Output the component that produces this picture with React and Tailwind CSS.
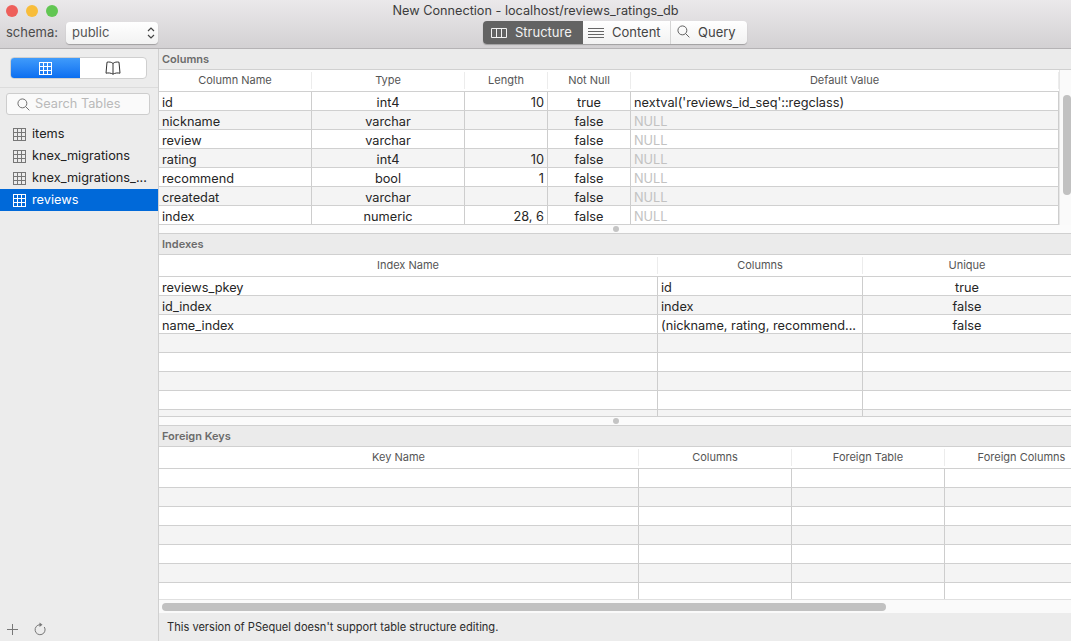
import React from 'react';

const columnRows = [
  ['id', 'int4', '10', 'true', "nextval('reviews_id_seq'::regclass)"],
  ['nickname', 'varchar', '', 'false', 'NULL'],
  ['review', 'varchar', '', 'false', 'NULL'],
  ['rating', 'int4', '10', 'false', 'NULL'],
  ['recommend', 'bool', '1', 'false', 'NULL'],
  ['createdat', 'varchar', '', 'false', 'NULL'],
  ['index', 'numeric', '28, 6', 'false', 'NULL'],
];

const indexRows = [
  ['reviews_pkey', 'id', 'true'],
  ['id_index', 'index', 'false'],
  ['name_index', '(nickname, rating, recommend...', 'false'],
  ['', '', ''],
  ['', '', ''],
  ['', '', ''],
  ['', '', ''],
  ['', '', ''],
];

const foreignRows = Array.from({ length: 7 }, () => ['', '', '', '']);

const GridIcon = ({ className }) => (
  <svg viewBox="0 0 13 13" className={className} fill="none" stroke="currentColor" strokeWidth="1" shapeRendering="crispEdges">
    <path d="M.5.5h12v12H.5zM4.500.5v12M8.500.5v12M.5 4.500h12M.5 8.500h12" />
  </svg>
);

const BookIcon = () => (
  <svg viewBox="0 0 16 14" className="w-4 h-[14px] text-[#333]" fill="none" stroke="currentColor" strokeWidth="1">
    <path d="M8 2.500C6.500 1 4 .8 2 1.200L1 12.200c2.400-.5 5-.3 7 1 2-1.300 4.600-1.500 7-1L14 1.200C12 .8 9.500 1 8 2.500zM8 2.500v10.700" />
  </svg>
);

const SearchIcon = ({ className }) => (
  <svg viewBox="0 0 14 14" className={className} fill="none" stroke="currentColor">
    <circle cx="5.800" cy="5.800" r="4.800" />
    <path d="M9.300 9.300L13.300 13.300" />
  </svg>
);

const SectionTitle = ({ children }) => (
  <div className="h-[21px] shrink-0 border-b border-[#d0d0d0] bg-[#ebebeb] pl-[3px] text-[11px] font-semibold leading-[20px] text-[#6b6b6b]">
    {children}
  </div>
);

const Splitter = () => (
  <div className="flex h-[9px] shrink-0 items-center justify-center border-b border-[#d0d0d0] bg-[#fbfbfb] pl-[1px]">
    <div className="h-[6px] w-[6px] rounded-full bg-[#c4c4c4]" />
  </div>
);

const Cell = ({ value, align, last }) => {
  const isNull = value === 'NULL';
  return (
    <div
      className={`truncate px-[3px] pt-[2px] leading-[18px] ${last ? '' : 'border-r border-[#cdcdcd]'} ${
        align === 'center' ? 'text-center' : align === 'right' ? 'text-right' : ''
      } ${isNull ? 'text-[#c2c2c2]' : 'text-[#262626]'}`}
    >
      {value}
    </div>
  );
};

const DataTable = ({ gridClass, headers, rows, aligns, bodyClass, lastOpen, wrapClass = '' }) => (
  <div className={`min-w-0 shrink-0 overflow-hidden ${wrapClass}`}>
    <div className={`grid h-[22px] border-b border-[#d0d0d0] bg-white ${gridClass}`}>
      {headers.map((h, i) => (
        <div key={i} className="flex h-[21px] items-center py-[2px]">
          <div
            className={`h-[17px] flex-1 truncate text-center text-[11px] leading-[17px] text-[#555] ${
              i === headers.length - 1 && lastOpen ? '' : 'border-r border-[#ececec]'
            }`}
          >
            {h}
          </div>
        </div>
      ))}
    </div>
    <div className={`overflow-hidden ${bodyClass}`}>
      {rows.map((row, r) => (
        <div
          key={r}
          className={`grid h-[19px] grid-rows-[18px] border-b border-[#d0d0d0] text-[12.75px] ${gridClass} ${
            r % 2 === 0 ? 'bg-white' : 'bg-[#f4f4f4]'
          }`}
        >
          {row.map((v, i) => (
            <Cell key={i} value={v} align={aligns[i]} last={i === row.length - 1 && lastOpen} />
          ))}
        </div>
      ))}
    </div>
  </div>
);

const SidebarItem = ({ name, active }) => (
  <div className={`flex h-[22px] items-center pl-[13px] pr-1 text-[12.75px] ${active ? 'bg-[#0069d9] text-white' : 'text-[#222]'}`}>
    <GridIcon className={`h-[13px] w-[13px] shrink-0 ${active ? 'text-white' : 'text-[#777]'}`} />
    <span className="ml-[6px] whitespace-nowrap">{name}</span>
  </div>
);

export default function App() {
  return (
    <div className="flex h-[641px] w-[1071px] flex-col overflow-hidden bg-[#ececec] font-['Inter','Liberation_Sans',sans-serif] text-[13px]">
      {/* Title bar */}
      <div className="h-[49px] shrink-0 border-b border-[#b5b3b5] bg-gradient-to-b from-[#ebe9eb] to-[#d3d1d3]">
        <div className="grid h-[21px] grid-cols-[1fr_auto_1fr] items-center">
          <div className="flex gap-2 pl-[6px] pt-[1px]">
            <span className="h-3 w-3 rounded-full bg-[#ee5f5b]" />
            <span className="h-3 w-3 rounded-full bg-[#f8bd3a]" />
            <span className="h-3 w-3 rounded-full bg-[#62c653]" />
          </div>
          <div className="text-[12.7px] text-[#3c3c3c]">New Connection - localhost/reviews_ratings_db</div>
          <div />
        </div>
        <div className="flex h-[23px] items-center">
          <div className="flex w-[159px] shrink-0 items-center pl-[6px]">
            <span className="w-[60px] text-[#4c4c4c]">schema:</span>
            <div className="flex h-[22px] w-[92px] items-center justify-between rounded bg-gradient-to-b from-white to-[#f2f2f2] pl-[6px] pr-[3px] text-[#555] shadow-[0_1px_1px_rgba(0,0,0,0.25)]">
              public
              <svg viewBox="0 0 8 14" className="h-[14px] w-2 text-[#444]" fill="none" stroke="currentColor" strokeWidth="1.200">
                <path d="M1 5l3-3 3 3M1 9l3 3 3-3" />
              </svg>
            </div>
          </div>
          <div className="flex flex-1 justify-center">
            <div className="flex h-[23px] w-[264px] overflow-hidden rounded text-[#444] shadow-[0_1px_1px_rgba(0,0,0,0.25)]">
              <div className="flex w-[100px] items-center gap-2 bg-[#636363] pl-2 text-[#f2f2f2]">
                <svg viewBox="0 0 16 12" className="h-3 w-4" fill="none" stroke="currentColor">
                  <path d="M.5 1.500h15v9H.5zM5.500 1.500v9M10.500 1.500v9" />
                </svg>
                Structure
              </div>
              <div className="flex w-[88px] items-center gap-2 border-r border-[#d4d4d4] bg-gradient-to-b from-white to-[#f2f2f2] pl-[5px]">
                <svg viewBox="0 0 16 10" className="h-[10px] w-4 text-[#666]" fill="none" stroke="currentColor">
                  <path d="M0 .5h16M0 3.500h16M0 6.500h16M0 9.500h16" />
                </svg>
                Content
              </div>
              <div className="flex flex-1 items-center gap-[8px] bg-gradient-to-b from-white to-[#f2f2f2] pl-[6px]">
                <SearchIcon className="-mt-[2px] h-[13px] w-[13px] text-[#555]" />
                Query
              </div>
            </div>
          </div>
        </div>
      </div>

      <div className="flex min-h-0 flex-1">
        {/* Sidebar */}
        <div className="flex w-[159px] shrink-0 flex-col overflow-hidden border-r border-[#d0d0d0] bg-[#ececec]">
          <div className="border-b border-[#dcdcdc] px-[10px] pb-[8px] pt-[8px]">
            <div className="flex h-[22px] w-[137px] overflow-hidden rounded border border-[#cfcfcf] bg-white">
              <div className="flex w-[69px] items-center justify-center bg-gradient-to-b from-[#3f9bfb] to-[#0a6ef0] text-white">
                <GridIcon className="h-[13px] w-[13px]" />
              </div>
              <div className="flex flex-1 items-center justify-center">
                <BookIcon />
              </div>
            </div>
          </div>
          <div className="px-[6px] pb-[8px] pt-[5px]">
            <div className="flex h-[22px] w-[144px] items-center rounded-[3px] border border-[#cdcdcd] bg-[#fafafa] pl-[10px] text-[12.75px] text-[#b9b9b9]">
              <SearchIcon className="h-[13px] w-[13px] text-[#666]" />
              <span className="ml-[5px]">Search Tables</span>
            </div>
          </div>
          <SidebarItem name="items" />
          <SidebarItem name="knex_migrations" />
          <SidebarItem name="knex_migrations_..." />
          <SidebarItem name="reviews" active />
          <div className="mt-auto flex items-center gap-[14px] pb-[5px] pl-[6px] text-[#777]">
            <svg viewBox="0 0 13 13" className="h-[13px] w-[13px]" fill="none" stroke="currentColor">
              <path d="M6.500 1v11M1 6.500h11" />
            </svg>
            <svg viewBox="0 0 14 14" className="h-[14px] w-[14px]" fill="none" stroke="currentColor">
              <path d="M7 2.700A5 5 0 1 0 11.300 5" />
              <path d="M6.500 .5L9.500 2.700 6.500 5z" fill="currentColor" stroke="none" />
            </svg>
          </div>
        </div>

        {/* Main */}
        <div className="flex min-w-0 flex-1 flex-col">
          <SectionTitle>Columns</SectionTitle>
          <div className="flex shrink-0">
            <DataTable
              wrapClass="flex-1"
              gridClass="grid-cols-[153px_153px_83px_83px_1fr]"
              headers={['Column Name', 'Type', 'Length', 'Not Null', 'Default Value']}
              rows={columnRows}
              aligns={['left', 'center', 'right', 'center', 'left']}
              bodyClass="h-[133px]"
            />
            <div className="w-[12px] shrink-0 border-l border-[#e6e6e6] bg-[#fafafa] pl-[3px] pt-[25px]">
              <div className="h-[100px] w-[8px] rounded-full bg-[#c1c1c1]" />
            </div>
          </div>
          <Splitter />
          <SectionTitle>Indexes</SectionTitle>
          <DataTable
            gridClass="grid-cols-[499px_205px_1fr]"
            headers={['Index Name', 'Columns', 'Unique']}
            rows={indexRows}
            aligns={['left', 'left', 'center']}
            bodyClass="h-[140px] border-b border-[#d0d0d0]"
            lastOpen
          />
          <Splitter />
          <SectionTitle>Foreign Keys</SectionTitle>
          <DataTable
            gridClass="grid-cols-[480px_153px_153px_153px]"
            headers={['Key Name', 'Columns', 'Foreign Table', 'Foreign Columns']}
            rows={foreignRows}
            aligns={['left', 'left', 'left', 'left']}
            bodyClass="h-[131px] border-b border-[#e0e0e0]"
            lastOpen
          />
          <div className="flex h-[13px] shrink-0 items-center bg-[#fafafa] pl-[3px]">
            <div className="h-[8px] w-[724px] rounded-full bg-[#c1c1c1]" />
          </div>
          <div className="flex flex-1 items-center bg-[#ececec] pl-2 text-[11.1px] text-[#2b2b2b]">
            This version of PSequel doesn't support table structure editing.
          </div>
        </div>
      </div>
    </div>
  );
}
